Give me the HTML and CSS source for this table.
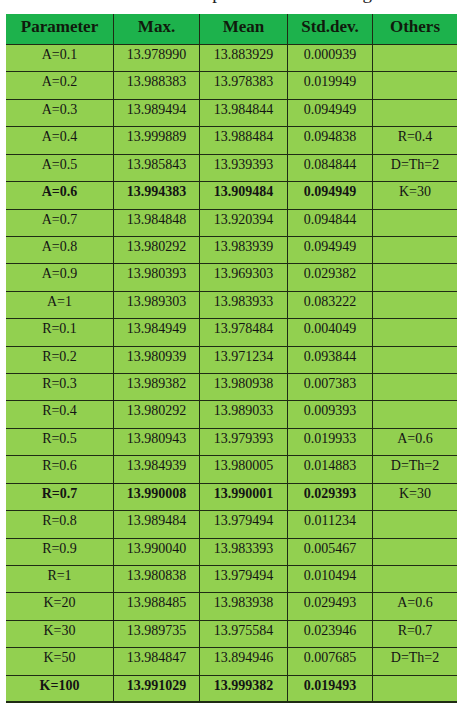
FILE: index.html
```html
<!DOCTYPE html>
<html>
<head>
<meta charset="utf-8">
<link rel="stylesheet" href="styles.css">
</head>
<body>
<div class="caption"><span>Table 2. Results of the parameters of the algorithm</span></div>
<div class="grid">
  <div class="c h">Parameter</div><div class="c h">Max.</div><div class="c h">Mean</div><div class="c h">Std.dev.</div><div class="c h last">Others</div>

  <div class="c">A=0.1</div><div class="c">13.978990</div><div class="c">13.883929</div><div class="c">0.000939</div><div class="c last"></div>
  <div class="c">A=0.2</div><div class="c">13.988383</div><div class="c">13.978383</div><div class="c">0.019949</div><div class="c last"></div>
  <div class="c">A=0.3</div><div class="c">13.989494</div><div class="c">13.984844</div><div class="c">0.094949</div><div class="c last"></div>
  <div class="c">A=0.4</div><div class="c">13.999889</div><div class="c">13.988484</div><div class="c">0.094838</div><div class="c last">R=0.4</div>
  <div class="c">A=0.5</div><div class="c">13.985843</div><div class="c">13.939393</div><div class="c">0.084844</div><div class="c last">D=Th=2</div>
  <div class="c b">A=0.6</div><div class="c b">13.994383</div><div class="c b">13.909484</div><div class="c b">0.094949</div><div class="c last">K=30</div>
  <div class="c">A=0.7</div><div class="c">13.984848</div><div class="c">13.920394</div><div class="c">0.094844</div><div class="c last"></div>
  <div class="c">A=0.8</div><div class="c">13.980292</div><div class="c">13.983939</div><div class="c">0.094949</div><div class="c last"></div>
  <div class="c">A=0.9</div><div class="c">13.980393</div><div class="c">13.969303</div><div class="c">0.029382</div><div class="c last"></div>
  <div class="c">A=1</div><div class="c">13.989303</div><div class="c">13.983933</div><div class="c">0.083222</div><div class="c last"></div>
  <div class="c">R=0.1</div><div class="c">13.984949</div><div class="c">13.978484</div><div class="c">0.004049</div><div class="c last"></div>
  <div class="c">R=0.2</div><div class="c">13.980939</div><div class="c">13.971234</div><div class="c">0.093844</div><div class="c last"></div>
  <div class="c">R=0.3</div><div class="c">13.989382</div><div class="c">13.980938</div><div class="c">0.007383</div><div class="c last"></div>
  <div class="c">R=0.4</div><div class="c">13.980292</div><div class="c">13.989033</div><div class="c">0.009393</div><div class="c last"></div>
  <div class="c">R=0.5</div><div class="c">13.980943</div><div class="c">13.979393</div><div class="c">0.019933</div><div class="c last">A=0.6</div>
  <div class="c">R=0.6</div><div class="c">13.984939</div><div class="c">13.980005</div><div class="c">0.014883</div><div class="c last">D=Th=2</div>
  <div class="c b">R=0.7</div><div class="c b">13.990008</div><div class="c b">13.990001</div><div class="c b">0.029393</div><div class="c last">K=30</div>
  <div class="c">R=0.8</div><div class="c">13.989484</div><div class="c">13.979494</div><div class="c">0.011234</div><div class="c last"></div>
  <div class="c">R=0.9</div><div class="c">13.990040</div><div class="c">13.983393</div><div class="c">0.005467</div><div class="c last"></div>
  <div class="c">R=1</div><div class="c">13.980838</div><div class="c">13.979494</div><div class="c">0.010494</div><div class="c last"></div>
  <div class="c">K=20</div><div class="c">13.988485</div><div class="c">13.983938</div><div class="c">0.029493</div><div class="c last">A=0.6</div>
  <div class="c">K=30</div><div class="c">13.989735</div><div class="c">13.975584</div><div class="c">0.023946</div><div class="c last">R=0.7</div>
  <div class="c">K=50</div><div class="c">13.984847</div><div class="c">13.894946</div><div class="c">0.007685</div><div class="c last">D=Th=2</div>
  <div class="c b bot">K=100</div><div class="c b bot">13.991029</div><div class="c b bot">13.999382</div><div class="c b bot">0.019493</div><div class="c last bot"></div>
</div>
</body>
</html>
```
FILE: styles.css
```css
html, body {
  margin: 0;
  padding: 0;
  background: #ffffff;
}
body {
  font-family: "Liberation Serif", "Times New Roman", Tinos, "Nimbus Roman", "DejaVu Serif", serif;
  color: #141414;
}
.caption {
  height: 5px;
  overflow: hidden;
  display: flex;
  align-items: flex-end;
  justify-content: center;
  font-size: 19px;
  line-height: 24px;
  color: #222;
  padding-right: 14px;
}
.caption span {
  white-space: nowrap;
}
.grid {
  margin: 9px 0 0 6px;
  width: 451px;
  display: grid;
  grid-template-columns: 108px 86px 88px 85px 84px;
  grid-template-rows: 31px;
  grid-auto-rows: 27.43px;
  background: #92d050;
}
.c {
  box-sizing: border-box;
  border-right: 1.5px solid #1f2b14;
  border-bottom: 1.5px solid #1f2b14;
  text-align: center;
  font-size: 14px;
  line-height: 16px;
  padding-top: 2px;
  white-space: nowrap;
  overflow: hidden;
}
.c.last {
  border-right: none;
}
.c.h {
  background: #1db24c;
  font-weight: bold;
  font-size: 17px;
  line-height: 20px;
  padding-top: 3px;
  color: #101a0c;
}
.c.b {
  font-weight: bold;
}
.c.bot {
  border-bottom: 2.5px solid #1f2b14;
}
```
